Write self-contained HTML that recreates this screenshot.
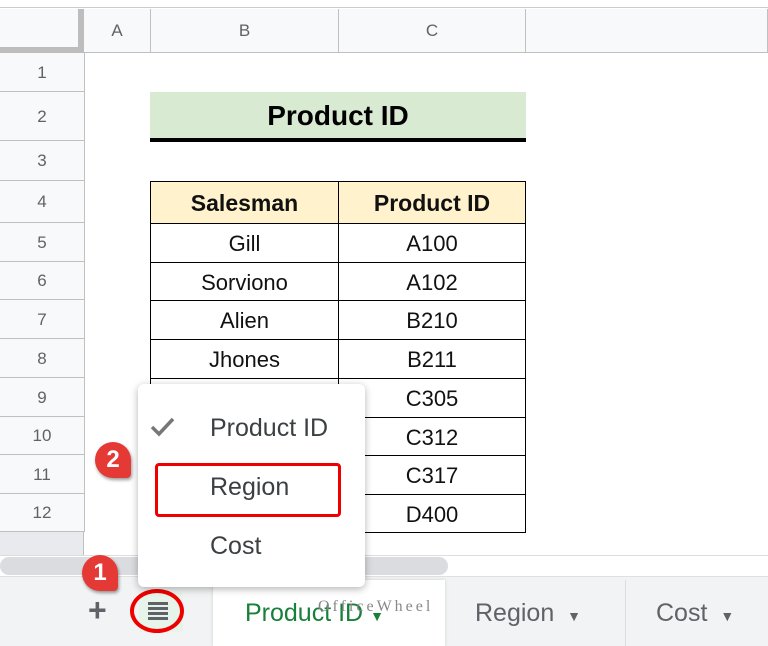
<!DOCTYPE html><html><head><style>
body{margin:0;width:768px;height:646px;overflow:hidden;background:#fff;font-family:"Liberation Sans",Arial,sans-serif;position:relative}
.a{position:absolute;box-sizing:border-box}
.hd{background:#f8f9fa;color:#5f6368;font-size:17px;text-align:center;border-right:1px solid #c0c0c0;border-bottom:1px solid #c0c0c0}
.c{border:1px solid #000;text-align:center;font-size:22px;color:#111}
.bd{position:absolute;width:36px;height:36px;background:#e53935;border-radius:50% 50% 12% 50%;color:#fff;font-weight:bold;font-size:24px;text-align:center;line-height:36px;box-shadow:1px 2px 3px rgba(0,0,0,.4)}
</style></head><body>
<div class="a" style="left:0;top:0;width:768px;height:8px;border-bottom:1px solid #ccc"></div>
<div class="a" style="left:0;top:9px;width:84px;height:44px;background:#f8f9fa;border-right:6px solid #bdbdbd;border-bottom:6px solid #bdbdbd"></div>
<div class="a hd" style="left:84px;top:9px;width:67px;height:44px;line-height:44px">A</div>
<div class="a hd" style="left:151px;top:9px;width:188px;height:44px;line-height:44px">B</div>
<div class="a hd" style="left:339px;top:9px;width:187px;height:44px;line-height:44px">C</div>
<div class="a hd" style="left:526px;top:9px;width:242px;height:44px"></div>
<div id="rows"></div>
<div class="a" style="left:0;top:532px;width:84px;height:24px;background:#e8eaed;border-right:1px solid #c0c0c0"></div>
<div class="a" style="left:0;top:555px;width:768px;height:1px;background:#ddd"></div>
<div class="a" style="left:0;top:557px;width:448px;height:18px;background:#dadce0;border-radius:9px"></div>
<div class="a" style="left:150px;top:92px;width:376px;height:46px;background:#d9ead3;font-weight:bold;font-size:28px;text-align:center;line-height:48px;color:#000">Product ID</div>
<div class="a" style="left:150px;top:138px;width:376px;height:4px;background:#000"></div>
<div id="tbl"></div>
<div class="a" style="left:0;top:576px;width:768px;height:70px;background:#f1f3f4;border-top:1px solid #e0e0e0"></div>
<div class="a" style="left:88px;top:594px;font-size:32px;color:#5f6368;line-height:32px;font-weight:bold">+</div>
<div class="a" style="left:139px;top:592px;width:44px;height:40px;background:#e6f4ea"></div>
<div class="a" style="left:148px;top:602px;width:20px;height:3px;background:#5f6368"></div>
<div class="a" style="left:148px;top:607px;width:20px;height:3px;background:#5f6368"></div>
<div class="a" style="left:148px;top:612px;width:20px;height:3px;background:#5f6368"></div>
<div class="a" style="left:148px;top:617px;width:20px;height:3px;background:#5f6368"></div>
<div class="a" style="left:130px;top:589px;width:54px;height:44px;border:4px solid #e00;border-radius:50%"></div>
<div class="a" style="left:213px;top:580px;width:232px;height:66px;background:#fff;box-shadow:0 0 3px #ccc"></div>
<div class="a" style="left:245px;top:599px;font-size:25px;color:#188038">Product ID <span style="font-size:14px">▼</span></div>
<div class="a" style="left:318px;top:598px;font-family:'Liberation Serif',serif;font-size:16px;letter-spacing:3px;color:#888">OfficeWheel</div>
<div class="a" style="left:475px;top:599px;font-size:25px;color:#5f6368">Region <span style="font-size:14px;margin-left:6px">▼</span></div>
<div class="a" style="left:625px;top:580px;width:1px;height:66px;background:#ddd"></div>
<div class="a" style="left:656px;top:599px;font-size:25px;color:#5f6368">Cost <span style="font-size:14px;margin-left:6px">▼</span></div>
<div class="a" style="left:138px;top:384px;width:227px;height:203px;background:#fff;border-radius:6px;box-shadow:0 2px 8px rgba(0,0,0,.3)"></div>
<svg class="a" style="left:150px;top:416px" width="26" height="22"><path d="M2 11 L9 18 L23 3" stroke="#777" stroke-width="3.5" fill="none"/></svg>
<div class="a" style="left:210px;top:414px;font-size:25px;color:#3c4043">Product ID</div>
<div class="a" style="left:155px;top:463px;width:186px;height:54px;border:3px solid #e00;border-radius:4px"></div>
<div class="a" style="left:210px;top:473px;font-size:25px;color:#3c4043">Region</div>
<div class="a" style="left:210px;top:532px;font-size:25px;color:#3c4043">Cost</div>
<div class="bd" style="left:95px;top:442px">2</div>
<div class="bd" style="left:82px;top:555px">1</div>
<script>
var ys=[53,92,141,181,223,262,300,339,378,417,455,494,532],h='';
for(var i=0;i<12;i++)h+='<div class="a hd" style="left:0;top:'+ys[i]+'px;width:85px;height:'+(ys[i+1]-ys[i])+'px;line-height:'+(ys[i+1]-ys[i])+'px">'+(i+1)+'</div>';
document.getElementById('rows').innerHTML=h;
var d=[['Salesman','Product ID'],['Gill','A100'],['Sorviono','A102'],['Alien','B210'],['Jhones','B211'],['','C305'],['','C312'],['','C317'],['','D400']],t='';
for(var r=0;r<9;r++){var y=ys[r+3],hh=ys[r+4]-y+1,s=r==0?'background:#fff2cc;font-weight:bold;font-size:23px;':'';
t+='<div class="a c" style="'+s+'left:150px;top:'+y+'px;width:189px;height:'+hh+'px;line-height:'+hh+'px">'+d[r][0]+'</div>';
t+='<div class="a c" style="'+s+'left:338px;top:'+y+'px;width:188px;height:'+hh+'px;line-height:'+hh+'px">'+d[r][1]+'</div>';}
document.getElementById('tbl').innerHTML=t;
</script>
</body></html>
